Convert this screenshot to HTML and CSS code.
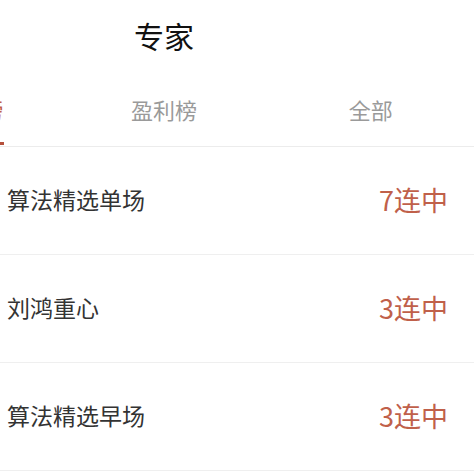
FILE: index.html
```html
<!DOCTYPE html>
<html lang="zh-CN">
<head>
<meta charset="utf-8">
<title>专家</title>
<link rel="stylesheet" href="styles.css">
</head>
<body>
<div class="page">
  <div class="top">
    <header class="header">专家</header>
    <nav class="tabs">
      <div class="tab active">命中率榜<span class="indicator"></span></div>
      <div class="tab">盈利榜</div>
      <div class="tab">全部</div>
    </nav>
  </div>
  <ul class="list">
    <li class="row"><span class="name">算法精选单场</span><span class="streak">7连中</span></li>
    <li class="row"><span class="name">刘鸿重心</span><span class="streak">3连中</span></li>
    <li class="row"><span class="name">算法精选早场</span><span class="streak">3连中</span></li>
  </ul>
</div>
</body>
</html>
```
FILE: styles.css
```css
html, body {
  margin: 0;
  padding: 0;
  background: #fff;
}
body {
  font-family: "Noto Sans CJK SC", "Noto Sans", sans-serif;
  overflow: hidden;
  width: 474px;
  height: 474px;
}
.page {
  width: 474px;
}
.top {
  margin-left: -146px;
  width: 620px;
}
.header {
  height: 70px;
  line-height: 70px;
  text-align: center;
  font-size: 30px;
  color: #111;
}
.tabs {
  display: flex;
  height: 77px;
  box-sizing: border-box;
  border-bottom: 1px solid #ececec;
}
.tab {
  flex: 1;
  position: relative;
  text-align: center;
  font-size: 22px;
  line-height: 30px;
  padding-top: 24px;
  color: #9a9a9a;
}
.tab.active {
  font-size: 23px;
  color: #c0604a;
}
.indicator {
  position: absolute;
  left: 50%;
  bottom: 1px;
  width: 94px;
  height: 3px;
  margin-left: -47px;
  background: #b5503c;
}
.list {
  list-style: none;
  margin: 0;
  padding: 0;
}
.row {
  display: flex;
  align-items: center;
  justify-content: space-between;
  height: 104px;
  padding: 0 26px 3px 7px;
  border-bottom: 1px solid #efefef;
}
.name {
  font-size: 23px;
  color: #333;
}
.streak {
  font-size: 27px;
  color: #c0604a;
}
```
